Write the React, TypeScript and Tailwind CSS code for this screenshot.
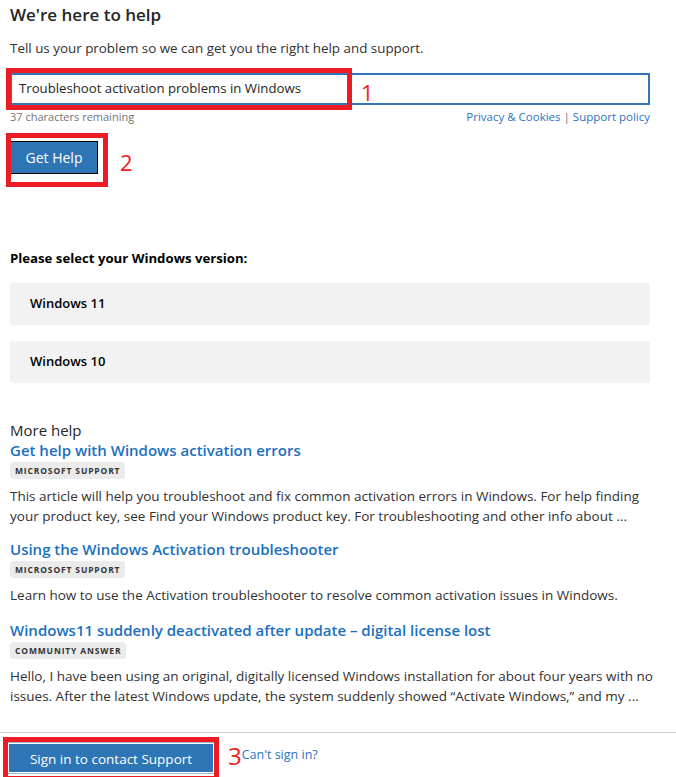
const links = [
  {
    title: "Get help with Windows activation errors",
    badge: "MICROSOFT SUPPORT",
    text: "This article will help you troubleshoot and fix common activation errors in Windows. For help finding your product key, see Find your Windows product key. For troubleshooting and other info about ...",
    mt: "mt-0",
  },
  {
    title: "Using the Windows Activation troubleshooter",
    badge: "MICROSOFT SUPPORT",
    text: "Learn how to use the Activation troubleshooter to resolve common activation issues in Windows.",
    mt: "mt-[13px]",
  },
  {
    title: "Windows11 suddenly deactivated after update \u2013 digital license lost",
    badge: "COMMUNITY ANSWER",
    text: "Hello, I have been using an original, digitally licensed Windows installation for about four years with no issues. After the latest Windows update, the system suddenly showed \u201cActivate Windows,\u201d and my ...",
    mt: "mt-[15px]",
  },
];

export default function App() {
  return (
    <div className="w-[676px] h-[777px] bg-white text-[#262626] overflow-hidden flex flex-col" style={{ fontFamily: '"Open Sans", "Noto Sans", sans-serif' }}>
      <div className="px-[10px] pt-[3px] w-[660px]">
        <h1 className="text-[17px] leading-[24px] font-semibold text-[#262626]">We're here to help</h1>
        <p className="mt-3 text-[13.4px] leading-[18px] text-[#323130]">Tell us your problem so we can get you the right help and support.</p>

        <div className="relative mt-4">
          <div className="h-[32px] border-2 border-[#3575b5] flex items-center pl-[7px] text-[13.2px] text-[#262626]">
            Troubleshoot activation problems in Windows
          </div>
          <div className="absolute left-[-4px] top-[-5px] w-[346px] h-[42px] border-[5px] border-[#ed1c24]" />
          <span className="absolute left-[351px] top-[6px] text-[22px] leading-[26px] text-[#ed1c24]">1</span>
        </div>

        <div className="mt-1 flex justify-between text-[11px] leading-[16px]">
          <span className="text-[#737373]">37 characters remaining</span>
          <span className="text-[11.5px] text-[#2b73c0]">Privacy &amp; Cookies <span className="text-[#737373]">|</span> Support policy</span>
        </div>

        <div className="relative mt-4 w-[88px]">
          <button className="w-[88px] h-[33px] bg-[#2e75b6] border border-black text-white text-[14px]">Get Help</button>
          <div className="absolute left-[-4px] top-[-8px] w-[102px] h-[54px] border-[5px] border-[#ed1c24]" />
          <span className="absolute left-[110px] top-[8px] text-[22px] leading-[26px] text-[#ed1c24]">2</span>
        </div>

        <p className="mt-[75px] text-[13.2px] leading-[18px] font-bold text-black">Please select your Windows version:</p>
        <div className="mt-4 flex flex-col gap-4">
          {["Windows 11", "Windows 10"].map((v) => (
            <div key={v} className="h-[42px] rounded-[3px] bg-[#f2f2f2] flex items-center pl-5 text-[13px] font-semibold text-black">{v}</div>
          ))}
        </div>

        <h2 className="mt-[37px] text-[15px] leading-[20px] text-[#262626]">More help</h2>
        {links.map((l) => (
          <div key={l.title} className={l.mt}>
            <div className="text-[15px] leading-[20px] font-semibold text-[#1a6fbf]">{l.title}</div>
            <div className="mt-[2px] w-fit rounded-[4px] bg-[#ebebeb] px-[5px] text-[8.5px] leading-[17px] font-bold tracking-[0.1em] text-[#333]">{l.badge}</div>
            <p className="mt-[7px] w-[646px] text-[13.5px] leading-[20px] text-[#323130]">{l.text}</p>
          </div>
        ))}
      </div>

      <div className="mt-auto border-t border-[#cccccc] h-[45px] flex items-start pt-[10px] px-[8px] gap-[14px]">
        <div className="relative">
          <button className="w-[206px] h-[30px] pt-[3px] bg-[#2e75b6] border border-white outline outline-1 outline-[#9ab8d6] text-white text-[13.5px]">Sign in to contact Support</button>
          <div className="absolute left-[-5px] top-[-6px] w-[216px] h-[44px] border-[5px] border-[#ed1c24]" />
        </div>
        <div className="flex items-start">
          <span className="text-[24px] leading-[28px] text-[#ed1c24] -mt-[1px]">3</span>
          <span className="mt-[3px] text-[12.5px] leading-[18px] text-[#2b73c0]">Can't sign in?</span>
        </div>
      </div>
    </div>
  );
}
